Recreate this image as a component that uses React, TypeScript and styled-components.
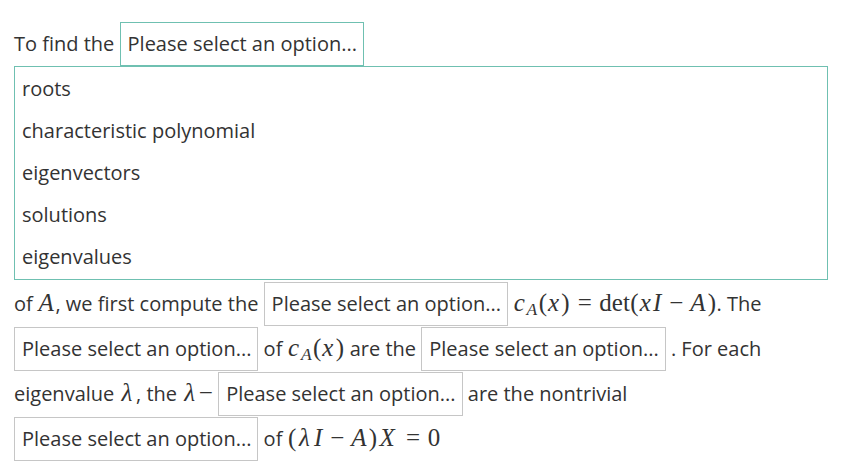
import React from "react";
import styled, { createGlobalStyle } from "styled-components";

const Global = createGlobalStyle`
  html, body { margin: 0; padding: 0; background: #ffffff; }
  body { font-family: "Open Sans", "Liberation Sans", sans-serif; }
`;

const Page = styled.div`
  width: 814px;
  padding: 22px 20px 0 14px;
  font-family: "Open Sans", "Liberation Sans", sans-serif;
  font-size: 20px;
  line-height: 28px;
  color: #333333;
`;

const Choice = styled.span<{ $open?: boolean }>`
  display: inline-block;
  box-sizing: border-box;
  height: 44px;
  padding: 8px 6px 8px 7px;
  line-height: 26px;
  border: 1px solid ${(p) => (p.$open ? "#6fc0b1" : "#c6c6c6")};
  margin-bottom: 1px;
  vertical-align: baseline;
  color: #333333;
  white-space: nowrap;
`;

const Listbox = styled.div`
  box-sizing: border-box;
  border: 1px solid #6fc0b1;
  padding: 1px 0;
  margin: -1px 0 2px;
`;

const Item = styled.div`
  height: 42px;
  line-height: 42px;
  padding: 0 7px;
  color: #333333;
`;

const M = styled.span`
  font-family: "Liberation Serif", "DejaVu Serif", serif;
  font-size: 25px;
  font-style: normal;
  white-space: nowrap;
`;

const V = styled.i<{ $wide?: boolean }>`
  font-family: "Liberation Serif", "DejaVu Serif", serif;
  font-style: italic;
  padding: 0 ${(p) => (p.$wide ? "0.15em 0 0.08em" : "0.07em 0 0.02em")};
`;

const Sub = styled.i`
  font-style: italic;
  font-size: 0.7em;
  position: relative;
  top: 0.25em;
  padding-right: 0.05em;
`;

const Paren = styled.span`
  padding: 0 0.02em;
`;

const Bin = styled.span<{ $rel?: boolean }>`
  display: inline-block;
  margin: 0 ${(p) => (p.$rel ? "0.3em" : "0.25em")};
`;

const options = [
  "roots",
  "characteristic polynomial",
  "eigenvectors",
  "solutions",
  "eigenvalues",
];

const PH = "Please select an option...";

const CA = () => (
  <>
    <V>c</V>
    <Sub>A</Sub>
    <Paren>(</Paren>
    <V>x</V>
    <Paren>)</Paren>
  </>
);

export default function App() {
  return (
    <>
      <Global />
      <Page>
        To find the <Choice $open>{PH}</Choice>
        <Listbox>
          {options.map((o) => (
            <Item key={o}>{o}</Item>
          ))}
        </Listbox>
        of{" "}
        <M>
          <V>A</V>
        </M>
        , we first compute the <Choice>{PH}</Choice>{" "}
        <M>
          <CA />
          <Bin $rel>=</Bin>det<Paren>(</Paren>
          <V>x</V>
          <V>I</V>
          <Bin>−</Bin>
          <V>A</V>
          <Paren>)</Paren>
        </M>
        . The <Choice>{PH}</Choice> of{" "}
        <M>
          <CA />
        </M>{" "}
        are the <Choice>{PH}</Choice> . For each eigenvalue{" "}
        <M>
          <V $wide>λ</V>
        </M>
        , the{" "}
        <M>
          <V $wide>λ</V>−
        </M>{" "}
        <Choice>{PH}</Choice> are the nontrivial <Choice>{PH}</Choice> of{" "}
        <M>
          <Paren>(</Paren>
          <V $wide>λ</V>
          <V>I</V>
          <Bin>−</Bin>
          <V>A</V>
          <Paren>)</Paren>
          <V $wide>X</V>
          <Bin $rel>=</Bin>0
        </M>
      </Page>
    </>
  );
}
